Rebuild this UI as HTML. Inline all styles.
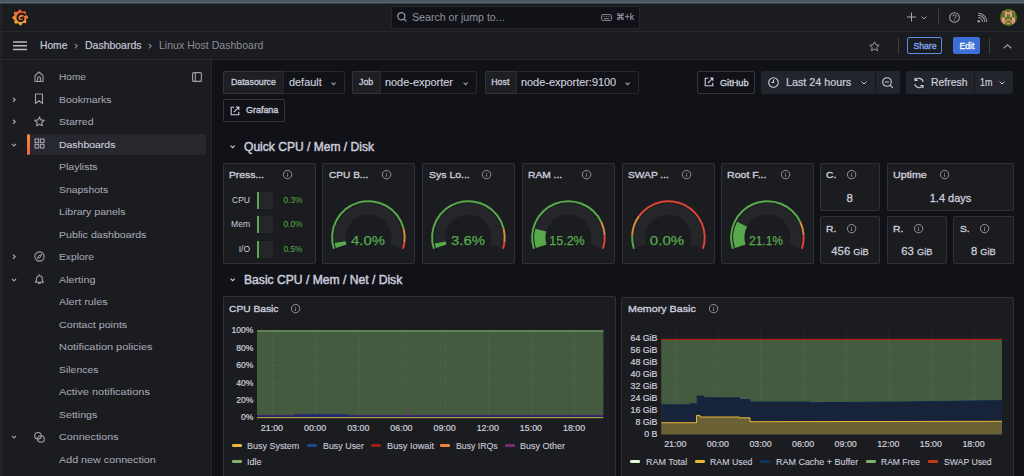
<!DOCTYPE html>
<html><head><meta charset="utf-8"><style>
html,body{margin:0;padding:0;width:1024px;height:476px;overflow:hidden;background:#111217;}
body{position:relative;font-family:"Liberation Sans",sans-serif;}
.a{position:absolute;}
.t{position:absolute;white-space:nowrap;}
svg{overflow:visible;}
</style></head><body>
<div class="a" style="left:0px;top:0px;width:1024px;height:476px;background:#111217;"></div>
<div class="a" style="left:0px;top:0px;width:1024px;height:4px;background:linear-gradient(to bottom,#4a5862 0px,#4a5862 2px,#5a6670 2px,#5a6670 3.5px,#3c4046 3.5px,#3c4046 4px);"></div>
<div class="a" style="left:0px;top:4px;width:1024px;height:27px;background:#1b1c20;"></div>
<div class="a" style="left:0px;top:31px;width:1024px;height:1px;background:rgba(204,204,220,0.12);"></div>
<div class="a" style="left:0px;top:32px;width:1024px;height:27px;background:#1b1c20;"></div>
<div class="a" style="left:0px;top:59px;width:1024px;height:1px;background:rgba(204,204,220,0.12);"></div>
<div class="a" style="left:0px;top:60px;width:211px;height:416px;background:#1b1c20;"></div>
<div class="a" style="left:211px;top:60px;width:1px;height:416px;background:rgba(204,204,220,0.12);"></div>
<div class="a" style="left:0px;top:4px;width:1.5px;height:472px;background:rgba(255,255,255,0.03);"></div>
<svg class="a" style="left:10px;top:7px;" width="20" height="20" viewBox="0 0 20 20"><defs><linearGradient id="lg" x1="0" y1="1" x2="0.25" y2="0"><stop offset="0" stop-color="#f8c832"/><stop offset="0.45" stop-color="#f28e2e"/><stop offset="1" stop-color="#ea5a2c"/></linearGradient></defs><polygon points="18.13,10.40 18.04,10.61 17.90,10.80 17.74,10.99 17.55,11.17 17.35,11.34 17.14,11.50 16.92,11.65 16.72,11.79 16.53,11.92 16.36,12.05 16.23,12.18 16.12,12.32 16.04,12.47 16.00,12.63 15.99,12.80 16.01,12.99 16.05,13.19 16.11,13.41 16.18,13.65 16.25,13.89 16.32,14.15 16.37,14.41 16.41,14.67 16.42,14.92 16.40,15.16 16.35,15.38 16.27,15.58 16.15,15.75 15.99,15.90 15.81,16.01 15.60,16.09 15.36,16.13 15.11,16.15 14.85,16.15 14.59,16.12 14.33,16.08 14.07,16.04 13.83,15.99 13.60,15.95 13.39,15.93 13.20,15.92 13.03,15.95 12.87,16.00 12.73,16.08 12.60,16.19 12.48,16.34 12.36,16.51 12.25,16.71 12.13,16.93 12.01,17.15 11.88,17.38 11.73,17.60 11.57,17.81 11.40,17.99 11.22,18.15 11.03,18.27 10.83,18.35 10.62,18.39 10.41,18.38 10.20,18.33 9.99,18.24 9.80,18.10 9.61,17.94 9.43,17.75 9.26,17.55 9.10,17.34 8.95,17.12 8.81,16.92 8.68,16.73 8.55,16.56 8.42,16.43 8.28,16.32 8.13,16.24 7.97,16.20 7.80,16.19 7.61,16.21 7.41,16.25 7.19,16.31 6.95,16.38 6.71,16.45 6.45,16.52 6.19,16.57 5.93,16.61 5.68,16.62 5.44,16.60 5.22,16.55 5.02,16.47 4.85,16.35 4.70,16.19 4.59,16.01 4.51,15.80 4.47,15.56 4.45,15.31 4.45,15.05 4.48,14.79 4.52,14.53 4.56,14.27 4.61,14.03 4.65,13.80 4.67,13.59 4.68,13.40 4.65,13.23 4.60,13.07 4.52,12.93 4.41,12.80 4.26,12.68 4.09,12.56 3.89,12.45 3.67,12.33 3.45,12.21 3.22,12.08 3.00,11.93 2.79,11.77 2.61,11.60 2.45,11.42 2.33,11.23 2.25,11.03 2.21,10.82 2.22,10.61 2.27,10.40 2.36,10.19 2.50,10.00 2.66,9.81 2.85,9.63 3.05,9.46 3.26,9.30 3.48,9.15 3.68,9.01 3.87,8.88 4.04,8.75 4.17,8.62 4.28,8.48 4.36,8.33 4.40,8.17 4.41,8.00 4.39,7.81 4.35,7.61 4.29,7.39 4.22,7.15 4.15,6.91 4.08,6.65 4.03,6.39 3.99,6.13 3.98,5.88 4.00,5.64 4.05,5.42 4.13,5.22 4.25,5.05 4.41,4.90 4.59,4.79 4.80,4.71 5.04,4.67 5.29,4.65 5.55,4.65 5.81,4.68 6.07,4.72 6.33,4.76 6.57,4.81 6.80,4.85 7.01,4.87 7.20,4.88 7.37,4.85 7.53,4.80 7.67,4.72 7.80,4.61 7.92,4.46 8.04,4.29 8.15,4.09 8.27,3.87 8.39,3.65 8.52,3.42 8.67,3.20 8.83,2.99 9.00,2.81 9.18,2.65 9.37,2.53 9.57,2.45 9.78,2.41 9.99,2.42 10.20,2.47 10.41,2.56 10.60,2.70 10.79,2.86 10.97,3.05 11.14,3.25 11.30,3.46 11.45,3.68 11.59,3.88 11.72,4.07 11.85,4.24 11.98,4.37 12.12,4.48 12.27,4.56 12.43,4.60 12.60,4.61 12.79,4.59 12.99,4.55 13.21,4.49 13.45,4.42 13.69,4.35 13.95,4.28 14.21,4.23 14.47,4.19 14.72,4.18 14.96,4.20 15.18,4.25 15.38,4.33 15.55,4.45 15.70,4.61 15.81,4.79 15.89,5.00 15.93,5.24 15.95,5.49 15.95,5.75 15.92,6.01 15.88,6.27 15.84,6.53 15.79,6.77 15.75,7.00 15.73,7.21 15.72,7.40 15.75,7.57 15.80,7.73 15.88,7.87 15.99,8.00 16.14,8.12 16.31,8.24 16.51,8.35 16.73,8.47 16.95,8.59 17.18,8.72 17.40,8.87 17.61,9.03 17.79,9.20 17.95,9.38 18.07,9.57 18.15,9.77 18.19,9.98 18.18,10.19" fill="url(#lg)"/><polyline points="14.70,8.08 14.47,7.87 14.23,7.67 13.98,7.50 13.72,7.34 13.45,7.20 13.18,7.08 12.90,6.98 12.61,6.89 12.32,6.83 12.03,6.79 11.74,6.77 11.45,6.76 11.17,6.78 10.88,6.81 10.60,6.86 10.33,6.93 10.07,7.02 9.81,7.12 9.56,7.25 9.32,7.38 9.09,7.53 8.88,7.70 8.68,7.87 8.49,8.06 8.31,8.26 8.16,8.47 8.01,8.69 7.88,8.91 7.77,9.14 7.67,9.38 7.60,9.62 7.53,9.86 7.49,10.11 7.46,10.36 7.45,10.60 7.45,10.84 7.47,11.09 7.50,11.32 7.56,11.56 7.62,11.78 7.70,12.00 7.80,12.22 7.90,12.42 8.02,12.62 8.16,12.80 8.30,12.97 8.45,13.14 8.61,13.29 8.78,13.43 8.96,13.55 9.14,13.67 9.33,13.76 9.53,13.85 9.72,13.92 9.92,13.98 10.12,14.02 10.33,14.05 10.53,14.07 10.73,14.07 10.93,14.06 11.12,14.04 11.31,14.00 11.50,13.95 11.68,13.89 11.86,13.82 12.02,13.74 12.19,13.64 12.34,13.54 12.48,13.43 12.61,13.31 12.74,13.18 12.85,13.05 12.96,12.91 13.05,12.76 13.13,12.61 13.20,12.46 13.26,12.30 13.31,12.15 13.35,11.99 13.37,11.83 13.39,11.67 13.39,11.51 13.39,11.36 13.37,11.21 13.34,11.06 13.31,10.91 13.26,10.77 13.21,10.64 13.14,10.51 13.07,10.38" stroke="#1a1b1f" stroke-width="2.0" fill="none" stroke-linecap="round"/><circle cx="11.1" cy="11.1" r="1.1" fill="#1a1b1f"/></svg>
<div class="a" style="left:390.6px;top:6px;width:249.4px;height:22.6px;background:#111217;box-sizing:border-box;border:1px solid rgba(204,204,220,0.12);border-radius:2px;"></div>
<svg class="a" style="left:397px;top:12px;" width="10" height="10" viewBox="0 0 10 10"><circle cx="4.3" cy="4.3" r="3.6" stroke="#9a9aa8" stroke-width="1.2" fill="none"/><path d="M7 7 L9.4 9.4" stroke="#9a9aa8" stroke-width="1.2"/></svg>
<div class="t" id="f0" style="top:12px;font-size:10.2px;line-height:11px;height:11px;color:rgba(204,204,220,0.65);transform:scaleX(1.0415);transform-origin:0 0;left:411.5px;-webkit-text-stroke:0.1px rgba(204,204,220,0.65);"><span>Search or jump to...</span></div>
<svg class="a" style="left:601px;top:14px;" width="11" height="7" viewBox="0 0 11 7"><rect x="0.6" y="0.6" width="9.8" height="5.8" rx="1" stroke="#8a8a96" stroke-width="1" fill="none"/><path d="M2.5 2.5h1M5 2.5h1M7.5 2.5h1M3 4.6h5" stroke="#8a8a96" stroke-width="0.9"/></svg>
<div class="t" id="f1" style="top:12px;font-size:8.8px;line-height:10px;height:10px;color:rgba(204,204,220,0.65);transform:scaleX(0.9705);transform-origin:0 0;left:616px;-webkit-text-stroke:0.25px rgba(204,204,220,0.65);"><span>&#8984;+k</span></div>
<svg class="a" style="left:907px;top:12px;" width="9" height="10" viewBox="0 0 9 10"><path d="M4.5 0.5v9M0 5h9" stroke="#a8a8b4" stroke-width="1"/></svg>
<svg class="a" style="left:920.5px;top:15.5px;" width="6" height="4" viewBox="0 0 6 4"><path d="M0.5 0.5L3 3L5.5 0.5" stroke="#9a9aa8" stroke-width="1" fill="none"/></svg>
<div class="a" style="left:938px;top:9px;width:1px;height:16px;background:rgba(204,204,220,0.20);"></div>
<svg class="a" style="left:949px;top:12px;" width="11" height="11" viewBox="0 0 11 11"><circle cx="5.5" cy="5.5" r="4.8" stroke="#9a9aa8" stroke-width="1.1" fill="none"/><path d="M3.9 4.3a1.6 1.6 0 1 1 2.2 1.5c-.5.2-.6.5-.6 1" stroke="#9a9aa8" stroke-width="1" fill="none"/><circle cx="5.5" cy="8.1" r="0.6" fill="#9a9aa8"/></svg>
<svg class="a" style="left:977px;top:13px;" width="10" height="10" viewBox="0 0 10 10"><circle cx="1.8" cy="8.2" r="1.3" fill="#9a9aa8"/><path d="M1 4.5a4.5 4.5 0 0 1 4.5 4.5M1 2.2a6.8 6.8 0 0 1 6.8 6.8M1.2 0.2a8.8 8.8 0 0 1 8.6 8.8" stroke="#9a9aa8" stroke-width="1.1" fill="none"/></svg>
<svg class="a" style="left:1000.1px;top:8.9px;" width="17" height="17" viewBox="0 0 17 17"><defs><clipPath id="av"><circle cx="8.5" cy="8.5" r="8.5"/></clipPath></defs><g clip-path="url(#av)"><rect width="17" height="17" fill="#557a22"/><g fill="#ef9488"><rect x="1.9" y="1.8" width="1.7" height="1.4"/><rect x="13.3" y="1.8" width="1.8" height="1.4"/><rect x="4.9" y="2.1" width="2" height="6.1"/><rect x="9.9" y="2.1" width="2" height="6.1"/><rect x="4.9" y="3.4" width="7" height="1.8"/><rect x="1.7" y="8.4" width="3.2" height="4.9"/><rect x="4.9" y="11.7" width="1.7" height="1.6"/><rect x="3.4" y="13.3" width="1.5" height="1.9"/><rect x="11.9" y="8.4" width="3.1" height="4.9"/><rect x="10.3" y="11.7" width="1.6" height="1.6"/><rect x="11.9" y="13.3" width="1.6" height="1.9"/><rect x="6.8" y="10.1" width="3.1" height="1.3"/><rect x="6.8" y="13.8" width="3.1" height="1.3"/></g></g></svg>
<svg class="a" style="left:13px;top:41px;" width="14" height="10" viewBox="0 0 14 10"><path d="M0 1h14M0 4.8h14M0 8.6h14" stroke="#b8b8c4" stroke-width="1.5"/></svg>
<div class="t" id="f2" style="top:40px;font-size:10.2px;line-height:11px;height:11px;color:#ccccdc;transform:scaleX(1.0078);transform-origin:0 0;left:39.7px;-webkit-text-stroke:0.15px #ccccdc;"><span>Home</span></div>
<svg class="a" style="left:74px;top:43px;" width="5" height="7" viewBox="0 0 5 7"><path d="M0.8 0.9L3.2 3.1L0.8 5.3" stroke="#8a8a96" stroke-width="1.1" fill="none"/></svg>
<div class="t" id="f3" style="top:40px;font-size:10.2px;line-height:11px;height:11px;color:#ccccdc;transform:scaleX(1.0284);transform-origin:0 0;left:84.7px;-webkit-text-stroke:0.15px #ccccdc;"><span>Dashboards</span></div>
<svg class="a" style="left:148px;top:43px;" width="5" height="7" viewBox="0 0 5 7"><path d="M0.8 0.9L3.2 3.1L0.8 5.3" stroke="#8a8a96" stroke-width="1.1" fill="none"/></svg>
<div class="t" id="f4" style="top:40px;font-size:10.2px;line-height:11px;height:11px;color:rgba(204,204,220,0.65);transform:scaleX(1.0346);transform-origin:0 0;left:158.5px;"><span>Linux Host Dashboard</span></div>
<svg class="a" style="left:868.5px;top:40.5px;" width="11" height="11" viewBox="0 0 11 11"><path d="M5.5 0.8l1.4 3 3.3.4-2.4 2.2.6 3.3-2.9-1.6-2.9 1.6.6-3.3L.8 4.2l3.3-.4z" stroke="#9a9aa8" stroke-width="1" fill="none" stroke-linejoin="round"/></svg>
<div class="a" style="left:898px;top:38px;width:1px;height:16px;background:rgba(204,204,220,0.20);"></div>
<div class="a" style="left:906.9px;top:37.1px;width:35.1px;height:16.9px;box-sizing:border-box;border:1px solid #5b8de8;border-radius:2px;"></div>
<div class="t" id="f5" style="top:41px;font-size:9.2px;line-height:10px;height:10px;color:#86aef5;transform:scaleX(0.9457);transform-origin:50% 0;left:624.5px;width:600px;text-align:center;-webkit-text-stroke:0.3px #86aef5;"><span>Share</span></div>
<div class="a" style="left:953.4px;top:37px;width:26.7px;height:17px;background:#3d6fd6;border-radius:2px;"></div>
<div class="t" id="f6" style="top:41px;font-size:9.2px;line-height:10px;height:10px;color:#ffffff;transform:scaleX(0.9404);transform-origin:50% 0;left:666.8px;width:600px;text-align:center;-webkit-text-stroke:0.3px #ffffff;"><span>Edit</span></div>
<div class="a" style="left:989px;top:38px;width:1px;height:16px;background:rgba(204,204,220,0.20);"></div>
<svg class="a" style="left:1003px;top:43.5px;" width="9" height="5" viewBox="0 0 9 5"><path d="M0.7 4.3L4.5 0.8L8.3 4.3" stroke="#9a9aa8" stroke-width="1.2" fill="none"/></svg>
<svg class="a" style="left:192px;top:72px;" width="10" height="10" viewBox="0 0 10 10"><rect x="0.6" y="0.6" width="8.8" height="8.8" rx="1" stroke="#a0a0ac" stroke-width="1.1" fill="none"/><path d="M3.3 0.6v8.8" stroke="#a0a0ac" stroke-width="1.1"/></svg>
<div class="a" style="left:30px;top:133.5px;width:176px;height:21.7px;background:rgba(204,204,220,0.07);border-radius:2px;"></div>
<div class="a" style="left:27px;top:133.5px;width:3px;height:21.7px;background:linear-gradient(0deg,#f55f3e,#ff8833);border-radius:2px;"></div>
<div class="t" id="f7" style="top:71px;font-size:9.6px;line-height:11px;height:11px;color:rgba(204,204,220,0.74);transform:scaleX(1.0549);transform-origin:0 0;left:59.4px;-webkit-text-stroke:0.12px rgba(204,204,220,0.74);"><span>Home</span></div>
<svg class="a" style="left:34px;top:70.8px;" width="11" height="11" viewBox="0 0 11 11"><path d="M1 10.5V4.6L5 1l4 3.6v5.9z M3.6 10.5V7.2a1.4 1.4 0 0 1 2.8 0v3.3" stroke="#a0a0ac" stroke-width="1.1" fill="none" stroke-linejoin="round"/></svg>
<div class="t" id="f8" style="top:94px;font-size:9.6px;line-height:11px;height:11px;color:rgba(204,204,220,0.74);transform:scaleX(1.0941);transform-origin:0 0;left:59.4px;-webkit-text-stroke:0.12px rgba(204,204,220,0.74);"><span>Bookmarks</span></div>
<svg class="a" style="left:34px;top:93.3px;" width="11" height="11" viewBox="0 0 11 11"><path d="M1.5 1h7v9.5L5 7.8 1.5 10.5z" stroke="#a0a0ac" stroke-width="1.1" fill="none" stroke-linejoin="round"/></svg>
<svg class="a" style="left:12px;top:96.8px;" width="5" height="7" viewBox="0 0 5 7"><path d="M1 0.8L3.2 2.75L1 4.7" stroke="#a0a0ac" stroke-width="1.2" fill="none"/></svg>
<div class="t" id="f9" style="top:116px;font-size:9.6px;line-height:11px;height:11px;color:rgba(204,204,220,0.74);transform:scaleX(1.0995);transform-origin:0 0;left:59.4px;-webkit-text-stroke:0.12px rgba(204,204,220,0.74);"><span>Starred</span></div>
<svg class="a" style="left:34px;top:115.8px;" width="11" height="11" viewBox="0 0 11 11"><path d="M5.5 0.9l1.4 3 3.3.4-2.4 2.2.6 3.3-2.9-1.6-2.9 1.6.6-3.3L.8 4.3l3.3-.4z" stroke="#a0a0ac" stroke-width="1.1" fill="none" stroke-linejoin="round"/></svg>
<svg class="a" style="left:12px;top:119.3px;" width="5" height="7" viewBox="0 0 5 7"><path d="M1 0.8L3.2 2.75L1 4.7" stroke="#a0a0ac" stroke-width="1.2" fill="none"/></svg>
<div class="t" id="f10" style="top:139px;font-size:9.6px;line-height:11px;height:11px;color:#ccccdc;transform:scaleX(1.0902);transform-origin:0 0;left:59.4px;-webkit-text-stroke:0.12px #ccccdc;"><span>Dashboards</span></div>
<svg class="a" style="left:34px;top:138.3px;" width="11" height="11" viewBox="0 0 11 11"><rect x="1" y="1" width="3.6" height="3.6" stroke="#a0a0ac" stroke-width="1.1" fill="none"/><rect x="6.4" y="1" width="3.6" height="3.6" stroke="#a0a0ac" stroke-width="1.1" fill="none"/><rect x="1" y="6.4" width="3.6" height="3.6" stroke="#a0a0ac" stroke-width="1.1" fill="none"/><rect x="6.4" y="6.4" width="3.6" height="3.6" stroke="#a0a0ac" stroke-width="1.1" fill="none"/></svg>
<svg class="a" style="left:11.3px;top:142.60000000000002px;" width="7" height="5" viewBox="0 0 7 5"><path d="M0.9 0.9L3 2.9L5.1 0.9" stroke="#a0a0ac" stroke-width="1.2" fill="none"/></svg>
<div class="t" id="f11" style="top:161px;font-size:9.6px;line-height:11px;height:11px;color:rgba(204,204,220,0.74);transform:scaleX(1.0970);transform-origin:0 0;left:59.4px;-webkit-text-stroke:0.12px rgba(204,204,220,0.74);"><span>Playlists</span></div>
<div class="t" id="f12" style="top:184px;font-size:9.6px;line-height:11px;height:11px;color:rgba(204,204,220,0.74);transform:scaleX(1.0850);transform-origin:0 0;left:59.4px;-webkit-text-stroke:0.12px rgba(204,204,220,0.74);"><span>Snapshots</span></div>
<div class="t" id="f13" style="top:206px;font-size:9.6px;line-height:11px;height:11px;color:rgba(204,204,220,0.74);transform:scaleX(1.1034);transform-origin:0 0;left:59.4px;-webkit-text-stroke:0.12px rgba(204,204,220,0.74);"><span>Library panels</span></div>
<div class="t" id="f14" style="top:229px;font-size:9.6px;line-height:11px;height:11px;color:rgba(204,204,220,0.74);transform:scaleX(1.1072);transform-origin:0 0;left:59.4px;-webkit-text-stroke:0.12px rgba(204,204,220,0.74);"><span>Public dashboards</span></div>
<div class="t" id="f15" style="top:251px;font-size:9.6px;line-height:11px;height:11px;color:rgba(204,204,220,0.74);transform:scaleX(1.0728);transform-origin:0 0;left:59.4px;-webkit-text-stroke:0.12px rgba(204,204,220,0.74);"><span>Explore</span></div>
<svg class="a" style="left:34px;top:250.8px;" width="11" height="11" viewBox="0 0 11 11"><circle cx="5.5" cy="5.5" r="4.6" stroke="#a0a0ac" stroke-width="1.1" fill="none"/><path d="M7.6 3.4L6.3 6.3 3.4 7.6 4.7 4.7z" stroke="#a0a0ac" stroke-width="1" fill="none"/></svg>
<svg class="a" style="left:12px;top:254.3px;" width="5" height="7" viewBox="0 0 5 7"><path d="M1 0.8L3.2 2.75L1 4.7" stroke="#a0a0ac" stroke-width="1.2" fill="none"/></svg>
<div class="t" id="f16" style="top:274px;font-size:9.6px;line-height:11px;height:11px;color:rgba(204,204,220,0.74);transform:scaleX(1.1189);transform-origin:0 0;left:59.4px;-webkit-text-stroke:0.12px rgba(204,204,220,0.74);"><span>Alerting</span></div>
<svg class="a" style="left:34px;top:273.3px;" width="11" height="11" viewBox="0 0 11 11"><path d="M5.4 1.2V2.4M2.5 8V5.6a2.9 2.9 0 0 1 5.8 0V8l1.2 1.2H1.3z M4.3 9.6a1.1 1.1 0 0 0 2.2 0" stroke="#a0a0ac" stroke-width="1.1" fill="none" stroke-linejoin="round"/></svg>
<svg class="a" style="left:11.3px;top:277.6px;" width="7" height="5" viewBox="0 0 7 5"><path d="M0.9 0.9L3 2.9L5.1 0.9" stroke="#a0a0ac" stroke-width="1.2" fill="none"/></svg>
<div class="t" id="f17" style="top:296px;font-size:9.6px;line-height:11px;height:11px;color:rgba(204,204,220,0.74);transform:scaleX(1.1253);transform-origin:0 0;left:59.4px;-webkit-text-stroke:0.12px rgba(204,204,220,0.74);"><span>Alert rules</span></div>
<div class="t" id="f18" style="top:319px;font-size:9.6px;line-height:11px;height:11px;color:rgba(204,204,220,0.74);transform:scaleX(1.1118);transform-origin:0 0;left:59.4px;-webkit-text-stroke:0.12px rgba(204,204,220,0.74);"><span>Contact points</span></div>
<div class="t" id="f19" style="top:341px;font-size:9.6px;line-height:11px;height:11px;color:rgba(204,204,220,0.74);transform:scaleX(1.1385);transform-origin:0 0;left:59.4px;-webkit-text-stroke:0.12px rgba(204,204,220,0.74);"><span>Notification policies</span></div>
<div class="t" id="f20" style="top:364px;font-size:9.6px;line-height:11px;height:11px;color:rgba(204,204,220,0.74);transform:scaleX(1.0892);transform-origin:0 0;left:59.4px;-webkit-text-stroke:0.12px rgba(204,204,220,0.74);"><span>Silences</span></div>
<div class="t" id="f21" style="top:386px;font-size:9.6px;line-height:11px;height:11px;color:rgba(204,204,220,0.74);transform:scaleX(1.1441);transform-origin:0 0;left:59.4px;-webkit-text-stroke:0.12px rgba(204,204,220,0.74);"><span>Active notifications</span></div>
<div class="t" id="f22" style="top:409px;font-size:9.6px;line-height:11px;height:11px;color:rgba(204,204,220,0.74);transform:scaleX(1.1018);transform-origin:0 0;left:59.4px;-webkit-text-stroke:0.12px rgba(204,204,220,0.74);"><span>Settings</span></div>
<div class="t" id="f23" style="top:431px;font-size:9.6px;line-height:11px;height:11px;color:rgba(204,204,220,0.74);transform:scaleX(1.1154);transform-origin:0 0;left:59.4px;-webkit-text-stroke:0.12px rgba(204,204,220,0.74);"><span>Connections</span></div>
<svg class="a" style="left:34px;top:430.8px;" width="11" height="11" viewBox="0 0 11 11"><circle cx="4" cy="4.8" r="3.3" stroke="#a0a0ac" stroke-width="1.1" fill="none"/><circle cx="7" cy="8" r="3.3" stroke="#a0a0ac" stroke-width="1.1" fill="none"/></svg>
<svg class="a" style="left:11.3px;top:435.1px;" width="7" height="5" viewBox="0 0 7 5"><path d="M0.9 0.9L3 2.9L5.1 0.9" stroke="#a0a0ac" stroke-width="1.2" fill="none"/></svg>
<div class="t" id="f24" style="top:454px;font-size:9.6px;line-height:11px;height:11px;color:rgba(204,204,220,0.74);transform:scaleX(1.1203);transform-origin:0 0;left:59.4px;-webkit-text-stroke:0.12px rgba(204,204,220,0.74);"><span>Add new connection</span></div>
<div class="a" style="left:223.2px;top:71.2px;width:59.8px;height:22.4px;background:#1e1f23;box-sizing:border-box;border:1px solid rgba(204,204,220,0.12);border-radius:2px;border-right:none;border-top-right-radius:0;border-bottom-right-radius:0;"></div>
<div class="a" style="left:283.0px;top:71.2px;width:62px;height:22.4px;background:#111217;box-sizing:border-box;border:1px solid rgba(204,204,220,0.12);border-radius:2px;border-top-left-radius:0;border-bottom-left-radius:0;"></div>
<div class="t" style="top:77px;font-size:8.8px;line-height:10px;height:10px;color:#ccccdc;left:-46.599999999999994px;width:600px;text-align:center;-webkit-text-stroke:0.3px #ccccdc;"><span>Datasource</span></div>
<div class="t" style="top:77px;font-size:10px;line-height:11px;height:11px;color:#ccccdc;transform:scaleX(1.09);transform-origin:0 0;left:288.5px;-webkit-text-stroke:0.15px #ccccdc;"><span>default</span></div>
<svg class="a" style="left:331px;top:81.6px;" width="6" height="4" viewBox="0 0 6 4"><path d="M0.6 0.6L2.6 2.6L4.6 0.6" stroke="#a0a0ac" stroke-width="1.1" fill="none"/></svg>
<div class="a" style="left:351.8px;top:71.2px;width:28.1px;height:22.4px;background:#1e1f23;box-sizing:border-box;border:1px solid rgba(204,204,220,0.12);border-radius:2px;border-right:none;border-top-right-radius:0;border-bottom-right-radius:0;"></div>
<div class="a" style="left:379.90000000000003px;top:71.2px;width:97.5px;height:22.4px;background:#111217;box-sizing:border-box;border:1px solid rgba(204,204,220,0.12);border-radius:2px;border-top-left-radius:0;border-bottom-left-radius:0;"></div>
<div class="t" style="top:77px;font-size:8.8px;line-height:10px;height:10px;color:#ccccdc;left:66.15000000000003px;width:600px;text-align:center;-webkit-text-stroke:0.3px #ccccdc;"><span>Job</span></div>
<div class="t" style="top:77px;font-size:10px;line-height:11px;height:11px;color:#ccccdc;transform:scaleX(1.09);transform-origin:0 0;left:385.40000000000003px;-webkit-text-stroke:0.15px #ccccdc;"><span>node-exporter</span></div>
<svg class="a" style="left:463px;top:81.6px;" width="6" height="4" viewBox="0 0 6 4"><path d="M0.6 0.6L2.6 2.6L4.6 0.6" stroke="#a0a0ac" stroke-width="1.1" fill="none"/></svg>
<div class="a" style="left:484.5px;top:71.2px;width:31px;height:22.4px;background:#1e1f23;box-sizing:border-box;border:1px solid rgba(204,204,220,0.12);border-radius:2px;border-right:none;border-top-right-radius:0;border-bottom-right-radius:0;"></div>
<div class="a" style="left:515.5px;top:71.2px;width:123.5px;height:22.4px;background:#111217;box-sizing:border-box;border:1px solid rgba(204,204,220,0.12);border-radius:2px;border-top-left-radius:0;border-bottom-left-radius:0;"></div>
<div class="t" style="top:77px;font-size:8.8px;line-height:10px;height:10px;color:#ccccdc;left:200.3px;width:600px;text-align:center;-webkit-text-stroke:0.3px #ccccdc;"><span>Host</span></div>
<div class="t" style="top:77px;font-size:10px;line-height:11px;height:11px;color:#ccccdc;transform:scaleX(1.09);transform-origin:0 0;left:521.0px;-webkit-text-stroke:0.15px #ccccdc;"><span>node-exporter:9100</span></div>
<svg class="a" style="left:625px;top:81.6px;" width="6" height="4" viewBox="0 0 6 4"><path d="M0.6 0.6L2.6 2.6L4.6 0.6" stroke="#a0a0ac" stroke-width="1.1" fill="none"/></svg>
<div class="a" style="left:222.9px;top:99.4px;width:62px;height:22.3px;box-sizing:border-box;border:1px solid rgba(204,204,220,0.20);border-radius:2px;"></div>
<svg class="a" style="left:229.8px;top:105.6px;" width="10" height="10" viewBox="0 0 10 10"><path d="M4.2 1.2H1.2V8.8H8.8V5.8" stroke="#ccccdc" stroke-width="1.1" fill="none"/><path d="M3.8 6.2L8.2 1.8" stroke="#ccccdc" stroke-width="1.1"/><path d="M5.6 0.6H9.4V4.4z" fill="#ccccdc"/></svg>
<div class="t" id="f25" style="top:105px;font-size:8.9px;line-height:10px;height:10px;color:#ccccdc;transform:scaleX(1.0069);transform-origin:0 0;left:246px;-webkit-text-stroke:0.35px #ccccdc;"><span>Grafana</span></div>
<div class="a" style="left:696.9px;top:71.3px;width:57.9px;height:22.3px;box-sizing:border-box;border:1px solid rgba(204,204,220,0.20);border-radius:2px;"></div>
<svg class="a" style="left:704.2px;top:77.3px;" width="10" height="10" viewBox="0 0 10 10"><path d="M4.2 1.2H1.2V8.8H8.8V5.8" stroke="#ccccdc" stroke-width="1.1" fill="none"/><path d="M3.8 6.2L8.2 1.8" stroke="#ccccdc" stroke-width="1.1"/><path d="M5.6 0.6H9.4V4.4z" fill="#ccccdc"/></svg>
<div class="t" id="f26" style="top:78px;font-size:8.9px;line-height:10px;height:10px;color:#ccccdc;transform:scaleX(1.0317);transform-origin:0 0;left:719.9px;-webkit-text-stroke:0.35px #ccccdc;"><span>GitHub</span></div>
<div class="a" style="left:761px;top:71px;width:139px;height:22.5px;background:#22252b;border-radius:2px;"></div>
<div class="a" style="left:875px;top:71px;width:1px;height:22.5px;background:#17181c;"></div>
<svg class="a" style="left:768px;top:77px;" width="11" height="11" viewBox="0 0 11 11"><circle cx="5.5" cy="5.5" r="4.8" stroke="#ccccdc" stroke-width="1.1" fill="none"/><path d="M5.5 2.4V5.5H3.4" stroke="#ccccdc" stroke-width="1.1" fill="none"/></svg>
<div class="t" id="f27" style="top:77px;font-size:10px;line-height:11px;height:11px;color:#ccccdc;transform:scaleX(1.0757);transform-origin:0 0;left:785.5px;-webkit-text-stroke:0.2px #ccccdc;"><span>Last 24 hours</span></div>
<svg class="a" style="left:861px;top:80.5px;" width="6" height="4" viewBox="0 0 6 4"><path d="M0.6 0.6L3 3L5.4 0.6" stroke="#ccccdc" stroke-width="1" fill="none"/></svg>
<svg class="a" style="left:882px;top:77px;" width="12" height="12" viewBox="0 0 12 12"><circle cx="5" cy="5" r="4.3" stroke="#ccccdc" stroke-width="1.1" fill="none"/><path d="M3 5h4M8.1 8.1L10.8 10.8" stroke="#ccccdc" stroke-width="1.1"/></svg>
<div class="a" style="left:906px;top:71px;width:107px;height:22.5px;background:#22252b;border-radius:2px;"></div>
<div class="a" style="left:974px;top:71px;width:1px;height:22.5px;background:#17181c;"></div>
<svg class="a" style="left:913px;top:76.5px;" width="12" height="12" viewBox="0 0 12 12"><path d="M10.2 4.8A4.6 4.6 0 0 0 2 3.2M1.8 7.2A4.6 4.6 0 0 0 10 8.8M2 0.8v2.6h2.6M10 11.2V8.6H7.4" stroke="#ccccdc" stroke-width="1.1" fill="none"/></svg>
<div class="t" id="f28" style="top:77px;font-size:10px;line-height:11px;height:11px;color:#ccccdc;transform:scaleX(1.0424);transform-origin:0 0;left:930.7px;-webkit-text-stroke:0.2px #ccccdc;"><span>Refresh</span></div>
<div class="t" id="f29" style="top:77px;font-size:10px;line-height:11px;height:11px;color:#ccccdc;transform:scaleX(0.8917);transform-origin:0 0;left:980px;-webkit-text-stroke:0.2px #ccccdc;"><span>1m</span></div>
<svg class="a" style="left:999px;top:80.5px;" width="6" height="4" viewBox="0 0 6 4"><path d="M0.6 0.6L3 3L5.4 0.6" stroke="#ccccdc" stroke-width="1" fill="none"/></svg>
<svg class="a" style="left:230px;top:144.6px;" width="6" height="4" viewBox="0 0 6 4"><path d="M0.6 0.6L2.7 2.6L4.8 0.6" stroke="#ccccdc" stroke-width="1.2" fill="none"/></svg>
<div class="t" id="f30" style="top:140px;font-size:12px;line-height:14px;height:14px;color:#ccccdc;transform:scaleX(1.0050);transform-origin:0 0;left:244px;-webkit-text-stroke:0.45px #ccccdc;"><span>Quick CPU / Mem / Disk</span></div>
<svg class="a" style="left:230px;top:278.1px;" width="6" height="4" viewBox="0 0 6 4"><path d="M0.6 0.6L2.7 2.6L4.8 0.6" stroke="#ccccdc" stroke-width="1.2" fill="none"/></svg>
<div class="t" id="f31" style="top:273px;font-size:12px;line-height:14px;height:14px;color:#ccccdc;transform:scaleX(1.0096);transform-origin:0 0;left:244px;-webkit-text-stroke:0.45px #ccccdc;"><span>Basic CPU / Mem / Net / Disk</span></div>
<div class="a" style="left:222.8px;top:162.8px;width:93.6px;height:101.2px;background:#1b1c20;box-sizing:border-box;border:1px solid rgba(204,204,220,0.12);border-radius:2px;"></div>
<div class="t" id="f32" style="top:169px;font-size:9.7px;line-height:11px;height:11px;color:#ccccdc;transform:scaleX(1.0626);transform-origin:0 0;left:229.4px;-webkit-text-stroke:0.35px #ccccdc;"><span>Press...</span></div>
<svg class="a" style="left:282.5px;top:170.0px;" width="10" height="10" viewBox="0 0 10 10"><circle cx="4.6" cy="4.6" r="4.2" stroke="rgba(204,204,220,0.65)" stroke-width="1" fill="none"/><path d="M4.6 4.3v2.5" stroke="rgba(204,204,220,0.65)" stroke-width="1"/><circle cx="4.6" cy="3" r="0.6" fill="rgba(204,204,220,0.65)"/></svg>
<div class="a" style="left:322.4px;top:162.8px;width:93.10000000000001px;height:101.2px;background:#1b1c20;box-sizing:border-box;border:1px solid rgba(204,204,220,0.12);border-radius:2px;"></div>
<div class="t" id="f33" style="top:169px;font-size:9.7px;line-height:11px;height:11px;color:#ccccdc;transform:scaleX(1.0428);transform-origin:0 0;left:328.5px;-webkit-text-stroke:0.35px #ccccdc;"><span>CPU B...</span></div>
<svg class="a" style="left:382.4px;top:170.0px;" width="10" height="10" viewBox="0 0 10 10"><circle cx="4.6" cy="4.6" r="4.2" stroke="rgba(204,204,220,0.65)" stroke-width="1" fill="none"/><path d="M4.6 4.3v2.5" stroke="rgba(204,204,220,0.65)" stroke-width="1"/><circle cx="4.6" cy="3" r="0.6" fill="rgba(204,204,220,0.65)"/></svg>
<div class="a" style="left:422.4px;top:162.8px;width:93.10000000000007px;height:101.2px;background:#1b1c20;box-sizing:border-box;border:1px solid rgba(204,204,220,0.12);border-radius:2px;"></div>
<div class="t" id="f34" style="top:169px;font-size:9.7px;line-height:11px;height:11px;color:#ccccdc;transform:scaleX(1.0821);transform-origin:0 0;left:428.5px;-webkit-text-stroke:0.35px #ccccdc;"><span>Sys Lo...</span></div>
<svg class="a" style="left:482.4px;top:170.0px;" width="10" height="10" viewBox="0 0 10 10"><circle cx="4.6" cy="4.6" r="4.2" stroke="rgba(204,204,220,0.65)" stroke-width="1" fill="none"/><path d="M4.6 4.3v2.5" stroke="rgba(204,204,220,0.65)" stroke-width="1"/><circle cx="4.6" cy="3" r="0.6" fill="rgba(204,204,220,0.65)"/></svg>
<div class="a" style="left:521.8px;top:162.8px;width:93.10000000000007px;height:101.2px;background:#1b1c20;box-sizing:border-box;border:1px solid rgba(204,204,220,0.12);border-radius:2px;"></div>
<div class="t" id="f35" style="top:169px;font-size:9.7px;line-height:11px;height:11px;color:#ccccdc;transform:scaleX(1.0558);transform-origin:0 0;left:527.9px;-webkit-text-stroke:0.35px #ccccdc;"><span>RAM ...</span></div>
<svg class="a" style="left:581.8px;top:170.0px;" width="10" height="10" viewBox="0 0 10 10"><circle cx="4.6" cy="4.6" r="4.2" stroke="rgba(204,204,220,0.65)" stroke-width="1" fill="none"/><path d="M4.6 4.3v2.5" stroke="rgba(204,204,220,0.65)" stroke-width="1"/><circle cx="4.6" cy="3" r="0.6" fill="rgba(204,204,220,0.65)"/></svg>
<div class="a" style="left:621.7px;top:162.8px;width:92.99999999999993px;height:101.2px;background:#1b1c20;box-sizing:border-box;border:1px solid rgba(204,204,220,0.12);border-radius:2px;"></div>
<div class="t" id="f36" style="top:169px;font-size:9.7px;line-height:11px;height:11px;color:#ccccdc;transform:scaleX(1.0551);transform-origin:0 0;left:627.8000000000001px;-webkit-text-stroke:0.35px #ccccdc;"><span>SWAP ...</span></div>
<svg class="a" style="left:681.7px;top:170.0px;" width="10" height="10" viewBox="0 0 10 10"><circle cx="4.6" cy="4.6" r="4.2" stroke="rgba(204,204,220,0.65)" stroke-width="1" fill="none"/><path d="M4.6 4.3v2.5" stroke="rgba(204,204,220,0.65)" stroke-width="1"/><circle cx="4.6" cy="3" r="0.6" fill="rgba(204,204,220,0.65)"/></svg>
<div class="a" style="left:720.6px;top:162.8px;width:93.49999999999993px;height:101.2px;background:#1b1c20;box-sizing:border-box;border:1px solid rgba(204,204,220,0.12);border-radius:2px;"></div>
<div class="t" id="f37" style="top:169px;font-size:9.7px;line-height:11px;height:11px;color:#ccccdc;transform:scaleX(1.0948);transform-origin:0 0;left:726.7px;-webkit-text-stroke:0.35px #ccccdc;"><span>Root F...</span></div>
<svg class="a" style="left:780.6px;top:170.0px;" width="10" height="10" viewBox="0 0 10 10"><circle cx="4.6" cy="4.6" r="4.2" stroke="rgba(204,204,220,0.65)" stroke-width="1" fill="none"/><path d="M4.6 4.3v2.5" stroke="rgba(204,204,220,0.65)" stroke-width="1"/><circle cx="4.6" cy="3" r="0.6" fill="rgba(204,204,220,0.65)"/></svg>
<div class="a" style="left:819.5px;top:162.8px;width:60.9px;height:48.2px;background:#1b1c20;box-sizing:border-box;border:1px solid rgba(204,204,220,0.12);border-radius:2px;"></div>
<div class="t" style="top:169px;font-size:9.7px;line-height:11px;height:11px;color:#ccccdc;transform:scaleX(1.06);transform-origin:0 0;left:826px;-webkit-text-stroke:0.35px #ccccdc;"><span>C.</span></div>
<svg class="a" style="left:847px;top:170.0px;" width="10" height="10" viewBox="0 0 10 10"><circle cx="4.6" cy="4.6" r="4.2" stroke="rgba(204,204,220,0.65)" stroke-width="1" fill="none"/><path d="M4.6 4.3v2.5" stroke="rgba(204,204,220,0.65)" stroke-width="1"/><circle cx="4.6" cy="3" r="0.6" fill="rgba(204,204,220,0.65)"/></svg>
<div class="a" style="left:887px;top:162.8px;width:127px;height:48.2px;background:#1b1c20;box-sizing:border-box;border:1px solid rgba(204,204,220,0.12);border-radius:2px;"></div>
<div class="t" id="f38" style="top:169px;font-size:9.7px;line-height:11px;height:11px;color:#ccccdc;transform:scaleX(1.1014);transform-origin:0 0;left:893.4px;-webkit-text-stroke:0.35px #ccccdc;"><span>Uptime</span></div>
<svg class="a" style="left:939.7px;top:170.0px;" width="10" height="10" viewBox="0 0 10 10"><circle cx="4.6" cy="4.6" r="4.2" stroke="rgba(204,204,220,0.65)" stroke-width="1" fill="none"/><path d="M4.6 4.3v2.5" stroke="rgba(204,204,220,0.65)" stroke-width="1"/><circle cx="4.6" cy="3" r="0.6" fill="rgba(204,204,220,0.65)"/></svg>
<div class="a" style="left:819.5px;top:216.1px;width:60.9px;height:47.9px;background:#1b1c20;box-sizing:border-box;border:1px solid rgba(204,204,220,0.12);border-radius:2px;"></div>
<div class="t" style="top:223px;font-size:9.7px;line-height:11px;height:11px;color:#ccccdc;transform:scaleX(1.06);transform-origin:0 0;left:826px;-webkit-text-stroke:0.35px #ccccdc;"><span>R.</span></div>
<svg class="a" style="left:847px;top:223.5px;" width="10" height="10" viewBox="0 0 10 10"><circle cx="4.6" cy="4.6" r="4.2" stroke="rgba(204,204,220,0.65)" stroke-width="1" fill="none"/><path d="M4.6 4.3v2.5" stroke="rgba(204,204,220,0.65)" stroke-width="1"/><circle cx="4.6" cy="3" r="0.6" fill="rgba(204,204,220,0.65)"/></svg>
<div class="a" style="left:886.8px;top:216.1px;width:60.7px;height:47.9px;background:#1b1c20;box-sizing:border-box;border:1px solid rgba(204,204,220,0.12);border-radius:2px;"></div>
<div class="t" style="top:223px;font-size:9.7px;line-height:11px;height:11px;color:#ccccdc;transform:scaleX(1.06);transform-origin:0 0;left:893.4px;-webkit-text-stroke:0.35px #ccccdc;"><span>R.</span></div>
<svg class="a" style="left:913.8px;top:223.5px;" width="10" height="10" viewBox="0 0 10 10"><circle cx="4.6" cy="4.6" r="4.2" stroke="rgba(204,204,220,0.65)" stroke-width="1" fill="none"/><path d="M4.6 4.3v2.5" stroke="rgba(204,204,220,0.65)" stroke-width="1"/><circle cx="4.6" cy="3" r="0.6" fill="rgba(204,204,220,0.65)"/></svg>
<div class="a" style="left:953.4px;top:216.1px;width:60.5px;height:47.9px;background:#1b1c20;box-sizing:border-box;border:1px solid rgba(204,204,220,0.12);border-radius:2px;"></div>
<div class="t" style="top:223px;font-size:9.7px;line-height:11px;height:11px;color:#ccccdc;transform:scaleX(1.06);transform-origin:0 0;left:959.7px;-webkit-text-stroke:0.35px #ccccdc;"><span>S.</span></div>
<svg class="a" style="left:979.7px;top:223.5px;" width="10" height="10" viewBox="0 0 10 10"><circle cx="4.6" cy="4.6" r="4.2" stroke="rgba(204,204,220,0.65)" stroke-width="1" fill="none"/><path d="M4.6 4.3v2.5" stroke="rgba(204,204,220,0.65)" stroke-width="1"/><circle cx="4.6" cy="3" r="0.6" fill="rgba(204,204,220,0.65)"/></svg>
<div class="a" style="left:222.6px;top:296.4px;width:393px;height:190px;background:#1b1c20;box-sizing:border-box;border:1px solid rgba(204,204,220,0.12);border-radius:2px;"></div>
<div class="t" id="f39" style="top:303px;font-size:9.7px;line-height:11px;height:11px;color:#ccccdc;transform:scaleX(1.0567);transform-origin:0 0;left:229px;-webkit-text-stroke:0.35px #ccccdc;"><span>CPU Basic</span></div>
<svg class="a" style="left:291px;top:303.9px;" width="10" height="10" viewBox="0 0 10 10"><circle cx="4.6" cy="4.6" r="4.2" stroke="rgba(204,204,220,0.65)" stroke-width="1" fill="none"/><path d="M4.6 4.3v2.5" stroke="rgba(204,204,220,0.65)" stroke-width="1"/><circle cx="4.6" cy="3" r="0.6" fill="rgba(204,204,220,0.65)"/></svg>
<div class="a" style="left:621.3px;top:296.5px;width:392.4px;height:190px;background:#1b1c20;box-sizing:border-box;border:1px solid rgba(204,204,220,0.12);border-radius:2px;"></div>
<div class="t" id="f40" style="top:303px;font-size:9.7px;line-height:11px;height:11px;color:#ccccdc;transform:scaleX(1.1047);transform-origin:0 0;left:627.7px;-webkit-text-stroke:0.35px #ccccdc;"><span>Memory Basic</span></div>
<svg class="a" style="left:708.6px;top:303.9px;" width="10" height="10" viewBox="0 0 10 10"><circle cx="4.6" cy="4.6" r="4.2" stroke="rgba(204,204,220,0.65)" stroke-width="1" fill="none"/><path d="M4.6 4.3v2.5" stroke="rgba(204,204,220,0.65)" stroke-width="1"/><circle cx="4.6" cy="3" r="0.6" fill="rgba(204,204,220,0.65)"/></svg>
<svg class="a" style="left:322.4px;top:195px;" width="93" height="70" viewBox="0 0 93 70"><path d="M13.87 53.07 A34.2 34.2 0 1 1 78.93 53.07 L68.27 49.61 A23 23 0 1 0 24.53 49.61 Z" fill="#25262a"/><path d="M13.87 53.07 A34.2 34.2 0 0 1 12.66 48.06 L23.71 46.24 A23 23 0 0 0 24.53 49.61 Z" fill="#58a94c"/><path d="M10.93 54.03 A37.3 37.3 0 1 1 82.53 33.22 L80.59 33.72 A35.3 35.3 0 1 0 12.83 53.41 Z" fill="#58a94c"/><path d="M82.53 33.22 A37.3 37.3 0 0 1 83.41 47.17 L81.42 46.92 A35.3 35.3 0 0 0 80.59 33.72 Z" fill="#dc8a3a"/><path d="M83.41 47.17 A37.3 37.3 0 0 1 81.87 54.03 L79.97 53.41 A35.3 35.3 0 0 0 81.42 46.92 Z" fill="#dc4437"/></svg>
<div class="t" id="f41" style="top:233px;font-size:13.2px;line-height:15px;height:15px;color:#58a94c;transform:scaleX(1.1243);transform-origin:50% 0;left:67.59999999999997px;width:600px;text-align:center;-webkit-text-stroke:0.25px #58a94c;"><span>4.0%</span></div>
<svg class="a" style="left:422.4px;top:195px;" width="93" height="70" viewBox="0 0 93 70"><path d="M13.87 53.07 A34.2 34.2 0 1 1 78.93 53.07 L68.27 49.61 A23 23 0 1 0 24.53 49.61 Z" fill="#25262a"/><path d="M13.87 53.07 A34.2 34.2 0 0 1 12.74 48.57 L23.77 46.58 A23 23 0 0 0 24.53 49.61 Z" fill="#58a94c"/><path d="M10.93 54.03 A37.3 37.3 0 1 1 82.53 33.22 L80.59 33.72 A35.3 35.3 0 1 0 12.83 53.41 Z" fill="#58a94c"/><path d="M82.53 33.22 A37.3 37.3 0 0 1 83.41 47.17 L81.42 46.92 A35.3 35.3 0 0 0 80.59 33.72 Z" fill="#dc8a3a"/><path d="M83.41 47.17 A37.3 37.3 0 0 1 81.87 54.03 L79.97 53.41 A35.3 35.3 0 0 0 81.42 46.92 Z" fill="#dc4437"/></svg>
<div class="t" id="f42" style="top:233px;font-size:13.2px;line-height:15px;height:15px;color:#58a94c;transform:scaleX(1.1277);transform-origin:50% 0;left:167.59999999999997px;width:600px;text-align:center;-webkit-text-stroke:0.25px #58a94c;"><span>3.6%</span></div>
<svg class="a" style="left:521.8px;top:195px;" width="93" height="70" viewBox="0 0 93 70"><path d="M13.87 53.07 A34.2 34.2 0 1 1 78.93 53.07 L68.27 49.61 A23 23 0 1 0 24.53 49.61 Z" fill="#25262a"/><path d="M13.87 53.07 A34.2 34.2 0 0 1 13.34 33.75 L24.17 36.61 A23 23 0 0 0 24.53 49.61 Z" fill="#58a94c"/><path d="M10.93 54.03 A37.3 37.3 0 0 1 80.15 26.62 L78.34 27.47 A35.3 35.3 0 0 0 12.83 53.41 Z" fill="#58a94c"/><path d="M80.15 26.62 A37.3 37.3 0 0 1 83.63 40.16 L81.63 40.28 A35.3 35.3 0 0 0 78.34 27.47 Z" fill="#dc8a3a"/><path d="M83.63 40.16 A37.3 37.3 0 0 1 81.87 54.03 L79.97 53.41 A35.3 35.3 0 0 0 81.63 40.28 Z" fill="#dc4437"/></svg>
<div class="t" id="f43" style="top:233px;font-size:13.2px;line-height:15px;height:15px;color:#58a94c;transform:scaleX(0.9464);transform-origin:50% 0;left:267.0px;width:600px;text-align:center;-webkit-text-stroke:0.25px #58a94c;"><span>15.2%</span></div>
<svg class="a" style="left:621.7px;top:195px;" width="93" height="70" viewBox="0 0 93 70"><path d="M13.87 53.07 A34.2 34.2 0 1 1 78.93 53.07 L68.27 49.61 A23 23 0 1 0 24.53 49.61 Z" fill="#25262a"/><path d="M13.87 53.07 A34.2 34.2 0 0 1 13.87 53.07 L24.53 49.61 A23 23 0 0 0 24.53 49.61 Z" fill="#58a94c"/><path d="M10.93 54.03 A37.3 37.3 0 0 1 9.17 40.16 L11.17 40.28 A35.3 35.3 0 0 0 12.83 53.41 Z" fill="#58a94c"/><path d="M9.17 40.16 A37.3 37.3 0 0 1 16.22 20.58 L17.84 21.75 A35.3 35.3 0 0 0 11.17 40.28 Z" fill="#dc8a3a"/><path d="M16.22 20.58 A37.3 37.3 0 0 1 81.87 54.03 L79.97 53.41 A35.3 35.3 0 0 0 17.84 21.75 Z" fill="#dc4437"/></svg>
<div class="t" id="f44" style="top:233px;font-size:13.2px;line-height:15px;height:15px;color:#58a94c;transform:scaleX(1.1410);transform-origin:50% 0;left:366.9000000000001px;width:600px;text-align:center;-webkit-text-stroke:0.25px #58a94c;"><span>0.0%</span></div>
<svg class="a" style="left:720.6px;top:195px;" width="93" height="70" viewBox="0 0 93 70"><path d="M13.87 53.07 A34.2 34.2 0 1 1 78.93 53.07 L68.27 49.61 A23 23 0 1 0 24.53 49.61 Z" fill="#25262a"/><path d="M13.87 53.07 A34.2 34.2 0 0 1 16.09 26.67 L26.01 31.85 A23 23 0 0 0 24.53 49.61 Z" fill="#58a94c"/><path d="M10.93 54.03 A37.3 37.3 0 0 1 80.15 26.62 L78.34 27.47 A35.3 35.3 0 0 0 12.83 53.41 Z" fill="#58a94c"/><path d="M80.15 26.62 A37.3 37.3 0 0 1 83.63 40.16 L81.63 40.28 A35.3 35.3 0 0 0 78.34 27.47 Z" fill="#dc8a3a"/><path d="M83.63 40.16 A37.3 37.3 0 0 1 81.87 54.03 L79.97 53.41 A35.3 35.3 0 0 0 81.63 40.28 Z" fill="#dc4437"/></svg>
<div class="t" id="f45" style="top:233px;font-size:13.2px;line-height:15px;height:15px;color:#58a94c;transform:scaleX(0.9063);transform-origin:50% 0;left:465.80000000000007px;width:600px;text-align:center;-webkit-text-stroke:0.25px #58a94c;"><span>21.1%</span></div>
<div class="t" style="top:195px;font-size:8.5px;line-height:10px;height:10px;color:#ccccdc;left:-350px;width:600px;text-align:right;"><span>CPU</span></div>
<div class="a" style="left:259px;top:191.5px;width:13.6px;height:17px;background:#25262a;border-radius:1px;"></div>
<div class="a" style="left:257.3px;top:191.5px;width:2px;height:17px;background:#58a94c;"></div>
<div class="t" style="top:195px;font-size:8.3px;line-height:10px;height:10px;color:#58a94c;left:283.5px;"><span>0.3%</span></div>
<div class="t" style="top:219px;font-size:8.5px;line-height:10px;height:10px;color:#ccccdc;left:-350px;width:600px;text-align:right;"><span>Mem</span></div>
<div class="a" style="left:259px;top:216.0px;width:13.6px;height:17px;background:#25262a;border-radius:1px;"></div>
<div class="a" style="left:257.3px;top:216.0px;width:2px;height:17px;background:#58a94c;"></div>
<div class="t" style="top:219px;font-size:8.3px;line-height:10px;height:10px;color:#58a94c;left:283.5px;"><span>0.0%</span></div>
<div class="t" style="top:244px;font-size:8.5px;line-height:10px;height:10px;color:#ccccdc;left:-350px;width:600px;text-align:right;"><span>I/O</span></div>
<div class="a" style="left:259px;top:240.5px;width:13.6px;height:17px;background:#25262a;border-radius:1px;"></div>
<div class="a" style="left:257.3px;top:240.5px;width:2px;height:17px;background:#58a94c;"></div>
<div class="t" style="top:244px;font-size:8.3px;line-height:10px;height:10px;color:#58a94c;left:283.5px;"><span>0.5%</span></div>
<div class="t" style="top:192px;font-size:11.5px;line-height:12px;height:12px;color:#ccccdc;left:549.8px;width:600px;text-align:center;-webkit-text-stroke:0.3px #ccccdc;"><span>8</span></div>
<div class="t" style="top:192px;font-size:11px;line-height:12px;height:12px;color:#ccccdc;left:650.5px;width:600px;text-align:center;-webkit-text-stroke:0.3px #ccccdc;"><span>1.4 days</span></div>
<div class="t" style="top:245px;font-size:11.3px;line-height:12px;height:12px;color:#ccccdc;left:550px;width:600px;text-align:center;-webkit-text-stroke:0.3px #ccccdc;"><span>456 <span style="font-size:9.2px">GiB</span></span></div>
<div class="t" style="top:245px;font-size:11.3px;line-height:12px;height:12px;color:#ccccdc;left:616.8px;width:600px;text-align:center;-webkit-text-stroke:0.3px #ccccdc;"><span>63 <span style="font-size:9.2px">GiB</span></span></div>
<div class="t" style="top:245px;font-size:11.3px;line-height:12px;height:12px;color:#ccccdc;left:683.3px;width:600px;text-align:center;-webkit-text-stroke:0.3px #ccccdc;"><span>8 <span style="font-size:9.2px">GiB</span></span></div>
<svg class="a" style="left:0px;top:0px;" width="1024" height="476" viewBox="0 0 1024 476"><path d="M257 417.50H603.4" stroke="rgba(204,204,220,0.07)" stroke-width="1"/><path d="M257 400.10H603.4" stroke="rgba(204,204,220,0.07)" stroke-width="1"/><path d="M257 382.70H603.4" stroke="rgba(204,204,220,0.07)" stroke-width="1"/><path d="M257 365.30H603.4" stroke="rgba(204,204,220,0.07)" stroke-width="1"/><path d="M257 347.90H603.4" stroke="rgba(204,204,220,0.07)" stroke-width="1"/><path d="M257 330.50H603.4" stroke="rgba(204,204,220,0.07)" stroke-width="1"/><path d="M272.70 330.5V417.5" stroke="rgba(204,204,220,0.07)" stroke-width="1"/><path d="M315.87 330.5V417.5" stroke="rgba(204,204,220,0.07)" stroke-width="1"/><path d="M359.04 330.5V417.5" stroke="rgba(204,204,220,0.07)" stroke-width="1"/><path d="M402.21 330.5V417.5" stroke="rgba(204,204,220,0.07)" stroke-width="1"/><path d="M445.38 330.5V417.5" stroke="rgba(204,204,220,0.07)" stroke-width="1"/><path d="M488.55 330.5V417.5" stroke="rgba(204,204,220,0.07)" stroke-width="1"/><path d="M531.72 330.5V417.5" stroke="rgba(204,204,220,0.07)" stroke-width="1"/><path d="M574.89 330.5V417.5" stroke="rgba(204,204,220,0.07)" stroke-width="1"/><rect x="257" y="330.5" width="346.4" height="84.5" fill="rgba(126,178,109,0.42)"/><path d="M257 331.0H603.4" stroke="#7eb26d" stroke-width="1"/><path d="M257 415.3 H294 V414.1 H348.5 V415.3 H603.4 V416.9 H257 Z" fill="#16306a"/><path d="M257 415.3 H294 V414.1 H348.5 V415.3 H603.4" stroke="#6a2a6a" stroke-width="0.7" fill="none" opacity="0.8"/><path d="M408.2 416.5V405.5" stroke="#7a3a70" stroke-width="1"/><path d="M257 417.7H603.4" stroke="#d9ad45" stroke-width="1"/></svg>
<div class="t" style="top:412px;font-size:8.6px;line-height:10px;height:10px;color:#cfcfdb;left:-346.6px;width:600px;text-align:right;-webkit-text-stroke:0.2px #cfcfdb;"><span>0%</span></div>
<div class="t" style="top:395px;font-size:8.6px;line-height:10px;height:10px;color:#cfcfdb;left:-346.6px;width:600px;text-align:right;-webkit-text-stroke:0.2px #cfcfdb;"><span>20%</span></div>
<div class="t" style="top:378px;font-size:8.6px;line-height:10px;height:10px;color:#cfcfdb;left:-346.6px;width:600px;text-align:right;-webkit-text-stroke:0.2px #cfcfdb;"><span>40%</span></div>
<div class="t" style="top:360px;font-size:8.6px;line-height:10px;height:10px;color:#cfcfdb;left:-346.6px;width:600px;text-align:right;-webkit-text-stroke:0.2px #cfcfdb;"><span>60%</span></div>
<div class="t" style="top:343px;font-size:8.6px;line-height:10px;height:10px;color:#cfcfdb;left:-346.6px;width:600px;text-align:right;-webkit-text-stroke:0.2px #cfcfdb;"><span>80%</span></div>
<div class="t" style="top:325px;font-size:8.6px;line-height:10px;height:10px;color:#cfcfdb;left:-346.6px;width:600px;text-align:right;-webkit-text-stroke:0.2px #cfcfdb;"><span>100%</span></div>
<div class="t" style="top:423px;font-size:8.9px;line-height:10px;height:10px;color:#cfcfdb;left:-28.100000000000023px;width:600px;text-align:center;-webkit-text-stroke:0.2px #cfcfdb;"><span>21:00</span></div>
<div class="t" style="top:423px;font-size:8.9px;line-height:10px;height:10px;color:#cfcfdb;left:15.069999999999993px;width:600px;text-align:center;-webkit-text-stroke:0.2px #cfcfdb;"><span>00:00</span></div>
<div class="t" style="top:423px;font-size:8.9px;line-height:10px;height:10px;color:#cfcfdb;left:58.24000000000001px;width:600px;text-align:center;-webkit-text-stroke:0.2px #cfcfdb;"><span>03:00</span></div>
<div class="t" style="top:423px;font-size:8.9px;line-height:10px;height:10px;color:#cfcfdb;left:101.40999999999997px;width:600px;text-align:center;-webkit-text-stroke:0.2px #cfcfdb;"><span>06:00</span></div>
<div class="t" style="top:423px;font-size:8.9px;line-height:10px;height:10px;color:#cfcfdb;left:144.57999999999998px;width:600px;text-align:center;-webkit-text-stroke:0.2px #cfcfdb;"><span>09:00</span></div>
<div class="t" style="top:423px;font-size:8.9px;line-height:10px;height:10px;color:#cfcfdb;left:187.75px;width:600px;text-align:center;-webkit-text-stroke:0.2px #cfcfdb;"><span>12:00</span></div>
<div class="t" style="top:423px;font-size:8.9px;line-height:10px;height:10px;color:#cfcfdb;left:230.91999999999996px;width:600px;text-align:center;-webkit-text-stroke:0.2px #cfcfdb;"><span>15:00</span></div>
<div class="t" style="top:423px;font-size:8.9px;line-height:10px;height:10px;color:#cfcfdb;left:274.0899999999999px;width:600px;text-align:center;-webkit-text-stroke:0.2px #cfcfdb;"><span>18:00</span></div>
<div class="a" style="left:231.8px;top:444.2px;width:10px;height:2.4px;background:#eab839;border-radius:1.2px;"></div>
<div class="t" id="f46" style="top:441px;font-size:9.1px;line-height:10px;height:10px;color:#ccccdc;transform:scaleX(0.9856);transform-origin:0 0;left:247.4px;-webkit-text-stroke:0.1px #ccccdc;"><span>Busy System</span></div>
<div class="a" style="left:307px;top:444.2px;width:10px;height:2.4px;background:#1a4a8a;border-radius:1.2px;"></div>
<div class="t" id="f47" style="top:441px;font-size:9.1px;line-height:10px;height:10px;color:#ccccdc;transform:scaleX(0.9773);transform-origin:0 0;left:322.6px;-webkit-text-stroke:0.1px #ccccdc;"><span>Busy User</span></div>
<div class="a" style="left:371.4px;top:444.2px;width:10px;height:2.4px;background:#9a2418;border-radius:1.2px;"></div>
<div class="t" id="f48" style="top:441px;font-size:9.1px;line-height:10px;height:10px;color:#ccccdc;transform:scaleX(1.0108);transform-origin:0 0;left:386.6px;-webkit-text-stroke:0.1px #ccccdc;"><span>Busy Iowait</span></div>
<div class="a" style="left:440.4px;top:444.2px;width:10px;height:2.4px;background:#ef843c;border-radius:1.2px;"></div>
<div class="t" id="f49" style="top:441px;font-size:9.1px;line-height:10px;height:10px;color:#ccccdc;transform:scaleX(0.9593);transform-origin:0 0;left:456.1px;-webkit-text-stroke:0.1px #ccccdc;"><span>Busy IRQs</span></div>
<div class="a" style="left:504.8px;top:444.2px;width:10px;height:2.4px;background:#7a2a74;border-radius:1.2px;"></div>
<div class="t" id="f50" style="top:441px;font-size:9.1px;line-height:10px;height:10px;color:#ccccdc;transform:scaleX(0.9868);transform-origin:0 0;left:520.3px;-webkit-text-stroke:0.1px #ccccdc;"><span>Busy Other</span></div>
<div class="a" style="left:231.8px;top:460.4px;width:10px;height:2.4px;background:#7eb26d;border-radius:1.2px;"></div>
<div class="t" id="f51" style="top:457px;font-size:9.1px;line-height:10px;height:10px;color:#ccccdc;transform:scaleX(0.9951);transform-origin:0 0;left:247.4px;-webkit-text-stroke:0.1px #ccccdc;"><span>Idle</span></div>
<svg class="a" style="left:0px;top:0px;" width="1024" height="476" viewBox="0 0 1024 476"><path d="M661.3 434.30H1002" stroke="rgba(204,204,220,0.07)" stroke-width="1"/><path d="M661.3 422.26H1002" stroke="rgba(204,204,220,0.07)" stroke-width="1"/><path d="M661.3 410.22H1002" stroke="rgba(204,204,220,0.07)" stroke-width="1"/><path d="M661.3 398.18H1002" stroke="rgba(204,204,220,0.07)" stroke-width="1"/><path d="M661.3 386.14H1002" stroke="rgba(204,204,220,0.07)" stroke-width="1"/><path d="M661.3 374.10H1002" stroke="rgba(204,204,220,0.07)" stroke-width="1"/><path d="M661.3 362.06H1002" stroke="rgba(204,204,220,0.07)" stroke-width="1"/><path d="M661.3 350.02H1002" stroke="rgba(204,204,220,0.07)" stroke-width="1"/><path d="M661.3 337.98H1002" stroke="rgba(204,204,220,0.07)" stroke-width="1"/><path d="M675.40 331V434.3" stroke="rgba(204,204,220,0.07)" stroke-width="1"/><path d="M718.10 331V434.3" stroke="rgba(204,204,220,0.07)" stroke-width="1"/><path d="M760.80 331V434.3" stroke="rgba(204,204,220,0.07)" stroke-width="1"/><path d="M803.50 331V434.3" stroke="rgba(204,204,220,0.07)" stroke-width="1"/><path d="M846.20 331V434.3" stroke="rgba(204,204,220,0.07)" stroke-width="1"/><path d="M888.90 331V434.3" stroke="rgba(204,204,220,0.07)" stroke-width="1"/><path d="M931.60 331V434.3" stroke="rgba(204,204,220,0.07)" stroke-width="1"/><path d="M974.30 331V434.3" stroke="rgba(204,204,220,0.07)" stroke-width="1"/><rect x="661.3" y="339.485" width="340.70000000000005" height="94.815" fill="rgba(126,178,109,0.42)"/><polygon points="661.3,404.8 690.0,404.8 690.0,403.8 697.2,403.8 697.2,396.0 704.0,396.0 704.0,397.8 739.4,397.8 739.4,399.5 750.0,399.5 750.0,402.0 809.7,402.0 809.7,402.7 900.0,402.0 1002.0,400.6 1002.0,434.3 661.3,434.3" fill="#162338"/><polyline points="661.3,404.8 690.0,404.8 690.0,403.8 697.2,403.8 697.2,396.0 704.0,396.0 704.0,397.8 739.4,397.8 739.4,399.5 750.0,399.5 750.0,402.0 809.7,402.0 809.7,402.7 900.0,402.0 1002.0,400.6" stroke="#0e2a4a" stroke-width="1" fill="none"/><polygon points="661.3,422.7 696.5,422.7 696.5,415.4 700.0,415.4 700.0,417.0 739.4,417.0 739.4,417.8 750.0,417.8 750.0,421.7 1002.0,421.3 1002.0,434.3 661.3,434.3" fill="#6b6134"/><polyline points="661.3,422.7 696.5,422.7 696.5,415.4 700.0,415.4 700.0,417.0 739.4,417.0 739.4,417.8 750.0,417.8 750.0,421.7 1002.0,421.3" stroke="#eab839" stroke-width="1" fill="none"/><path d="M661.3 339.485H1002" stroke="#bf1b00" stroke-width="1"/></svg>
<div class="t" style="top:429px;font-size:8.8px;line-height:10px;height:10px;color:#cfcfdb;left:57.39999999999998px;width:600px;text-align:right;-webkit-text-stroke:0.2px #cfcfdb;"><span>0 B</span></div>
<div class="t" style="top:417px;font-size:8.8px;line-height:10px;height:10px;color:#cfcfdb;left:57.39999999999998px;width:600px;text-align:right;-webkit-text-stroke:0.2px #cfcfdb;"><span>8 GiB</span></div>
<div class="t" style="top:405px;font-size:8.8px;line-height:10px;height:10px;color:#cfcfdb;left:57.39999999999998px;width:600px;text-align:right;-webkit-text-stroke:0.2px #cfcfdb;"><span>16 GiB</span></div>
<div class="t" style="top:393px;font-size:8.8px;line-height:10px;height:10px;color:#cfcfdb;left:57.39999999999998px;width:600px;text-align:right;-webkit-text-stroke:0.2px #cfcfdb;"><span>24 GiB</span></div>
<div class="t" style="top:381px;font-size:8.8px;line-height:10px;height:10px;color:#cfcfdb;left:57.39999999999998px;width:600px;text-align:right;-webkit-text-stroke:0.2px #cfcfdb;"><span>32 GiB</span></div>
<div class="t" style="top:369px;font-size:8.8px;line-height:10px;height:10px;color:#cfcfdb;left:57.39999999999998px;width:600px;text-align:right;-webkit-text-stroke:0.2px #cfcfdb;"><span>40 GiB</span></div>
<div class="t" style="top:357px;font-size:8.8px;line-height:10px;height:10px;color:#cfcfdb;left:57.39999999999998px;width:600px;text-align:right;-webkit-text-stroke:0.2px #cfcfdb;"><span>48 GiB</span></div>
<div class="t" style="top:345px;font-size:8.8px;line-height:10px;height:10px;color:#cfcfdb;left:57.39999999999998px;width:600px;text-align:right;-webkit-text-stroke:0.2px #cfcfdb;"><span>56 GiB</span></div>
<div class="t" style="top:333px;font-size:8.8px;line-height:10px;height:10px;color:#cfcfdb;left:57.39999999999998px;width:600px;text-align:right;-webkit-text-stroke:0.2px #cfcfdb;"><span>64 GiB</span></div>
<div class="t" style="top:439px;font-size:8.9px;line-height:10px;height:10px;color:#cfcfdb;left:375.29999999999995px;width:600px;text-align:center;-webkit-text-stroke:0.2px #cfcfdb;"><span>21:00</span></div>
<div class="t" style="top:439px;font-size:8.9px;line-height:10px;height:10px;color:#cfcfdb;left:417.9px;width:600px;text-align:center;-webkit-text-stroke:0.2px #cfcfdb;"><span>00:00</span></div>
<div class="t" style="top:439px;font-size:8.9px;line-height:10px;height:10px;color:#cfcfdb;left:460.5px;width:600px;text-align:center;-webkit-text-stroke:0.2px #cfcfdb;"><span>03:00</span></div>
<div class="t" style="top:439px;font-size:8.9px;line-height:10px;height:10px;color:#cfcfdb;left:503.0999999999999px;width:600px;text-align:center;-webkit-text-stroke:0.2px #cfcfdb;"><span>06:00</span></div>
<div class="t" style="top:439px;font-size:8.9px;line-height:10px;height:10px;color:#cfcfdb;left:545.6999999999999px;width:600px;text-align:center;-webkit-text-stroke:0.2px #cfcfdb;"><span>09:00</span></div>
<div class="t" style="top:439px;font-size:8.9px;line-height:10px;height:10px;color:#cfcfdb;left:588.3px;width:600px;text-align:center;-webkit-text-stroke:0.2px #cfcfdb;"><span>12:00</span></div>
<div class="t" style="top:439px;font-size:8.9px;line-height:10px;height:10px;color:#cfcfdb;left:630.9px;width:600px;text-align:center;-webkit-text-stroke:0.2px #cfcfdb;"><span>15:00</span></div>
<div class="t" style="top:439px;font-size:8.9px;line-height:10px;height:10px;color:#cfcfdb;left:673.5px;width:600px;text-align:center;-webkit-text-stroke:0.2px #cfcfdb;"><span>18:00</span></div>
<div class="a" style="left:630px;top:460.2px;width:10px;height:2.4px;background:#e0f9d7;border-radius:1.2px;"></div>
<div class="t" id="f52" style="top:457px;font-size:9.1px;line-height:10px;height:10px;color:#ccccdc;transform:scaleX(0.9861);transform-origin:0 0;left:646px;-webkit-text-stroke:0.1px #ccccdc;"><span>RAM Total</span></div>
<div class="a" style="left:694.6px;top:460.2px;width:10px;height:2.4px;background:#eab839;border-radius:1.2px;"></div>
<div class="t" id="f53" style="top:457px;font-size:9.1px;line-height:10px;height:10px;color:#ccccdc;transform:scaleX(0.9643);transform-origin:0 0;left:710px;-webkit-text-stroke:0.1px #ccccdc;"><span>RAM Used</span></div>
<div class="a" style="left:760.3px;top:460.2px;width:10px;height:2.4px;background:#0d3260;border-radius:1.2px;"></div>
<div class="t" id="f54" style="top:457px;font-size:9.1px;line-height:10px;height:10px;color:#ccccdc;transform:scaleX(0.9858);transform-origin:0 0;left:775.6px;-webkit-text-stroke:0.1px #ccccdc;"><span>RAM Cache + Buffer</span></div>
<div class="a" style="left:866px;top:460.2px;width:10px;height:2.4px;background:#7eb26d;border-radius:1.2px;"></div>
<div class="t" id="f55" style="top:457px;font-size:9.1px;line-height:10px;height:10px;color:#ccccdc;transform:scaleX(0.9388);transform-origin:0 0;left:881.3px;-webkit-text-stroke:0.1px #ccccdc;"><span>RAM Free</span></div>
<div class="a" style="left:928.2px;top:460.2px;width:10px;height:2.4px;background:#c8361c;border-radius:1.2px;"></div>
<div class="t" id="f56" style="top:457px;font-size:9.1px;line-height:10px;height:10px;color:#ccccdc;transform:scaleX(0.9511);transform-origin:0 0;left:943.6px;-webkit-text-stroke:0.1px #ccccdc;"><span>SWAP Used</span></div>
</body></html>
